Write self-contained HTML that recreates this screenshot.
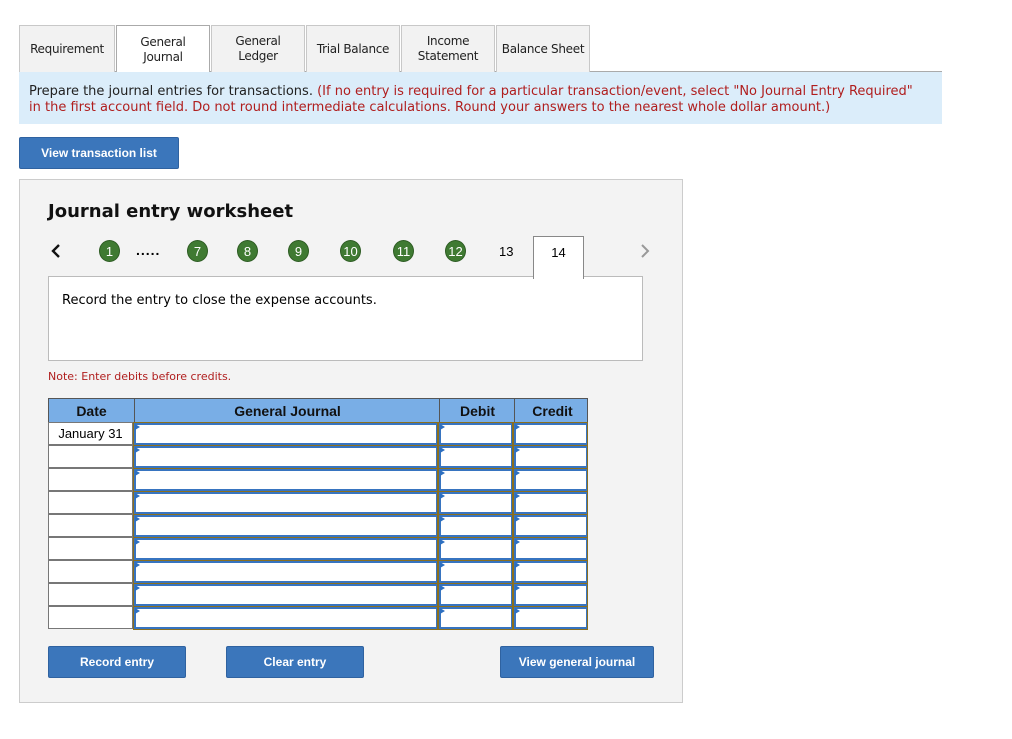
<!DOCTYPE html>
<html><head><style>
body{margin:0;width:1012px;height:739px;background:#fff;font-family:Verdana,"DejaVu Sans",sans-serif;position:relative;overflow:hidden}
.a{position:absolute}
.tab{position:absolute;top:25px;height:46px;border:1px solid #c8c8c8;border-bottom:none;background:#f2f2f2;font-size:12px;display:flex;align-items:center;justify-content:center;text-align:center;line-height:15px;color:#222;font-family:"DejaVu Sans",Verdana,sans-serif;letter-spacing:-0.3px}
.btn{position:absolute;background:#3b76bb;color:#fff;font:bold 12px "Liberation Sans",Arial,sans-serif;display:flex;align-items:center;justify-content:center;border-radius:2px;border:1px solid #2f62a0}
.c{position:absolute;top:240px;width:21px;height:22px;border-radius:50%;background:#3f7a32;border:1px solid #2d5c23;color:#fff;font:13px "Liberation Sans",Arial,sans-serif;display:flex;align-items:center;justify-content:center;box-sizing:border-box}
.cell{position:absolute;background:#8b6f1e;box-sizing:border-box}
.cell i{position:absolute;left:1px;top:1px;right:1px;bottom:1px;border:2px solid #3774c0;background:#fff;border-right-width:1px}
.cell b{position:absolute;left:2px;top:2px;width:0;height:0;border-left:5px solid #2d6fc0;border-top:3px solid transparent;border-bottom:3px solid transparent}
.d{position:absolute;left:48px;width:85px;height:23px;border:1px solid #777;box-sizing:border-box;background:#fff;font:13px "Liberation Sans",Arial,sans-serif;display:flex;align-items:center;justify-content:center}
</style></head><body>
<div class="a" style="left:19px;top:71px;width:923px;height:1px;background:#aaa"></div>
<div class="tab" style="left:19px;width:94px">Requirement</div>
<div class="tab" style="left:116px;width:92px;background:#fff;height:48px;border-color:#aaa">General<br>Journal</div>
<div class="tab" style="left:211px;width:92px">General<br>Ledger</div>
<div class="tab" style="left:306px;width:92px">Trial Balance</div>
<div class="tab" style="left:401px;width:92px">Income<br>Statement</div>
<div class="tab" style="left:496px;width:92px">Balance Sheet</div>
<div class="a" style="left:19px;top:72px;width:923px;height:52px;background:#dbedfa;font-size:13px;line-height:16px;padding:12px 10px 0;box-sizing:border-box;color:#222;white-space:nowrap">Prepare the journal entries for transactions. <span style="color:#b01e1e">(If no entry is required for a particular transaction/event, select "No Journal Entry Required"<br>in the first account field. Do not round intermediate calculations. Round your answers to the nearest whole dollar amount.)</span></div>
<div class="btn" style="left:19px;top:137px;width:158px;height:30px">View transaction list</div>
<div class="a" style="left:19px;top:179px;width:662px;height:522px;background:#f3f3f3;border:1px solid #ccc"></div>
<div class="a" style="left:48px;top:201px;font:bold 18px Verdana,'DejaVu Sans',sans-serif;color:#111">Journal entry worksheet</div>
<svg class="a" style="left:50px;top:243px" width="12" height="16"><path d="M9 2 L3 8 L9 14" stroke="#111" stroke-width="2.4" fill="none"/></svg>
<svg class="a" style="left:639px;top:243px" width="12" height="16"><path d="M3 2 L9 8 L3 14" stroke="#999" stroke-width="2" fill="none"/></svg>
<div class="c" style="left:99px">1</div>
<div class="a" style="left:136px;top:242px;font:bold 14px 'Liberation Sans';letter-spacing:1px">.....</div>
<div class="c" style="left:187px">7</div>
<div class="c" style="left:237px">8</div>
<div class="c" style="left:288px">9</div>
<div class="c" style="left:340px">10</div>
<div class="c" style="left:393px">11</div>
<div class="c" style="left:445px">12</div>
<div class="a" style="left:499px;top:244px;font:13px 'Liberation Sans',sans-serif">13</div>
<div class="a" style="left:533px;top:236px;width:49px;height:42px;background:#fff;border:1px solid #888;border-bottom:none;font:13px 'Liberation Sans',sans-serif;text-align:center;line-height:32px;z-index:2">14</div>
<div class="a" style="left:48px;top:276px;width:595px;height:85px;background:#fff;border:1px solid #bbb;font-size:13px;padding:16px 13px;box-sizing:border-box">Record the entry to close the expense accounts.</div>
<div class="a" style="left:48px;top:370px;font-size:11px;color:#b01e1e">Note: Enter debits before credits.</div>
<div class="a" style="left:48px;top:398px;width:540px;height:25px;background:#79aee6;border:1px solid #555;box-sizing:border-box;font:bold 14px 'Liberation Sans',Arial,sans-serif;color:#111">
<span class="a" style="left:0;width:85px;text-align:center;height:24px;line-height:24px">Date</span>
<span class="a" style="left:85px;width:305px;text-align:center;border-left:1px solid #555;height:24px;top:0;line-height:24px">General Journal</span>
<span class="a" style="left:390px;width:75px;text-align:center;border-left:1px solid #555;height:24px;line-height:24px">Debit</span>
<span class="a" style="left:465px;width:75px;text-align:center;border-left:1px solid #555;height:24px;line-height:24px">Credit</span>
</div>
<div id="rows"></div>
<script>
var h='';for(var r=0;r<9;r++){var y=422+r*23;
h+='<div class="d" style="top:'+y+'px">'+(r==0?'January 31':'')+'</div>';
[[133,305],[438,75],[513,75]].forEach(function(c){h+='<div class="cell" style="left:'+c[0]+'px;top:'+y+'px;width:'+c[1]+'px;height:24px"><i></i><b></b></div>';});}
document.getElementById('rows').innerHTML=h;
</script>
<div class="btn" style="left:48px;top:646px;width:136px;height:30px">Record entry</div>
<div class="btn" style="left:226px;top:646px;width:136px;height:30px">Clear entry</div>
<div class="btn" style="left:500px;top:646px;width:152px;height:30px">View general journal</div>
</body></html>
